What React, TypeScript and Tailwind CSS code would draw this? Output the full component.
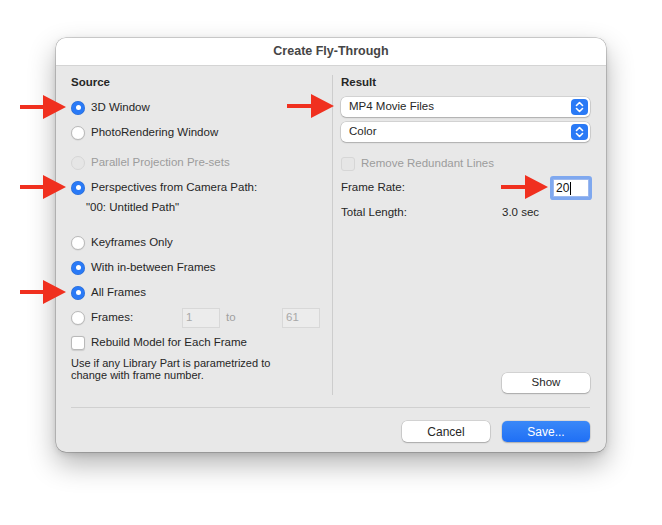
import React from "react";

const FONT = { fontFamily: '"Liberation Sans", Arial, sans-serif' };

function Radio({ state }: { state: "on" | "off" | "disabled" }) {
  if (state === "on")
    return (
      <span className="flex h-[14px] w-[14px] shrink-0 items-center justify-center rounded-full bg-[#2a7af6] shadow-[inset_0_0_0_0.5px_rgba(0,0,0,0.15)]">
        <span className="h-[5px] w-[5px] rounded-full bg-white" />
      </span>
    );
  if (state === "disabled")
    return <span className="h-[14px] w-[14px] shrink-0 rounded-full border border-[#d6d6d6] bg-[#e6e6e6]" />;
  return (
    <span className="h-[14px] w-[14px] shrink-0 rounded-full border border-[#b9b9b9] bg-white shadow-[0_0.5px_1px_rgba(0,0,0,0.12)]" />
  );
}

function Check({ disabled }: { disabled?: boolean }) {
  return disabled ? (
    <span className="h-[14px] w-[14px] shrink-0 rounded-[3px] border border-[#d6d6d6] bg-[#e6e6e6]" />
  ) : (
    <span className="h-[14px] w-[14px] shrink-0 rounded-[3px] border border-[#b9b9b9] bg-white shadow-[0_0.5px_1px_rgba(0,0,0,0.12)]" />
  );
}

function RadioRow({ state, label, className = "" }: { state: "on" | "off" | "disabled"; label: string; className?: string }) {
  return (
    <div className={`flex h-[25px] items-center gap-[6px] ${className}`}>
      <Radio state={state} />
      <span className={state === "disabled" ? "text-[#9c9c9c]" : "text-[#262626]"}>{label}</span>
    </div>
  );
}

function Popup({ label }: { label: string }) {
  return (
    <div className="flex h-[20px] items-center justify-between rounded-[5px] bg-white pl-[8px] pr-[2px] shadow-[0_0_0_0.5px_rgba(0,0,0,0.18),0_1px_1.5px_rgba(0,0,0,0.18)]">
      <span className="text-[#262626]">{label}</span>
      <span className="flex h-[16px] w-[17px] items-center justify-center rounded-[4px] bg-[#2a7af6]">
        <svg width="9" height="12" viewBox="0 0 9 12" fill="none" stroke="white" strokeWidth="1.6" strokeLinecap="round" strokeLinejoin="round">
          <path d="M1.5 4.5 L4.5 1.5 L7.5 4.5" />
          <path d="M1.5 7.5 L4.5 10.5 L7.5 7.5" />
        </svg>
      </span>
    </div>
  );
}

function Arrow({ left, top, width = 46 }: { left: number; top: number; width?: number }) {
  const h = 24;
  return (
    <svg
      className="absolute"
      style={{ left, top: top - h / 2 }}
      width={width}
      height={h}
      viewBox={`0 0 ${width} ${h}`}
    >
      <polygon
        points={`0,10 ${width - 23},10 ${width - 23},0 ${width},12 ${width - 23},24 ${width - 23},14 0,14`}
        fill="#f0301f"
      />
    </svg>
  );
}

export default function App() {
  return (
    <div className="relative h-[525px] w-[662px] bg-white pl-[56px] pt-[38px] text-[11.5px]" style={FONT}>
      <div className="flex h-[414px] w-[550px] flex-col overflow-hidden rounded-[10px] bg-[#e8e8e8] shadow-[0_0_0_0.5px_rgba(0,0,0,0.3),0_12px_28px_rgba(0,0,0,0.3),0_2px_6px_rgba(0,0,0,0.12)]">
        <div className="flex h-[28px] shrink-0 items-center justify-center border-b border-[#d4d4d4] bg-white">
          <span className="text-[12.5px] font-bold text-[#454545]">Create Fly-Through</span>
        </div>
        <div className="flex flex-col pl-[15px] pr-[16px] pt-[5px]">
          <div className="flex h-[325px]">
            {/* Left column */}
            <div className="flex w-[261px] flex-col">
              <div className="flex h-[24px] items-center font-bold text-[#262626]">Source</div>
              <RadioRow state="on" label="3D Window" />
              <RadioRow state="off" label="PhotoRendering Window" />
              <RadioRow state="disabled" label="Parallel Projection Pre-sets" className="mt-[5px]" />
              <RadioRow state="on" label="Perspectives from Camera Path:" />
              <div className="flex h-[16px] items-center pl-[15px] text-[#262626]">"00: Untitled Path"</div>
              <RadioRow state="off" label="Keyframes Only" className="mt-[14px]" />
              <RadioRow state="on" label="With in-between Frames" />
              <RadioRow state="on" label="All Frames" />
              <div className="flex h-[25px] items-center">
                <Radio state="off" />
                <span className="ml-[6px] w-[91px] text-[#262626]">Frames:</span>
                <span className="flex h-[20px] w-[38px] items-center border border-[#d8d8d8] bg-[#ececec] pl-[3px] text-[#a8a8a8]">1</span>
                <span className="ml-[6px] w-[56px] text-[#a0a0a0]">to</span>
                <span className="flex h-[20px] w-[38px] items-center border border-[#d8d8d8] bg-[#ececec] pl-[3px] text-[#a8a8a8]">61</span>
              </div>
              <div className="flex h-[25px] items-center gap-[6px]">
                <Check />
                <span className="text-[#262626]">Rebuild Model for Each Frame</span>
              </div>
              <div className="mt-[3px] text-[11px] leading-[11.5px] text-[#262626]">
                Use if any Library Part is parametrized to
                <br />
                change with frame number.
              </div>
            </div>
            {/* Divider */}
            <div className="mb-[1px] mt-[4px] w-px bg-[#cdcdcd]" />
            {/* Right column */}
            <div className="flex flex-1 flex-col pb-[3px] pl-[8px]">
              <div className="flex h-[24px] items-center font-bold text-[#262626]">Result</div>
              <div className="mt-[2px]">
                <Popup label="MP4 Movie Files" />
              </div>
              <div className="mt-[5px]">
                <Popup label="Color" />
              </div>
              <div className="mt-[9px] flex h-[25px] items-center gap-[6px]">
                <Check disabled />
                <span className="text-[#9c9c9c]">Remove Redundant Lines</span>
              </div>
              <div className="flex h-[24px] items-center justify-between pr-[1px]">
                <span className="text-[#262626]">Frame Rate:</span>
                <span className="flex h-[18px] w-[36px] items-center rounded-[1px] border border-[#9db9ee] bg-white pl-[2px] text-[12px] text-[#111] shadow-[0_0_0_3px_#7fa8ef]">
                  20<span className="ml-[1px] inline-block h-[13px] w-px bg-black" />
                </span>
              </div>
              <div className="flex h-[25px] items-center">
                <span className="w-[161px] text-[#262626]">Total Length:</span>
                <span className="text-[#262626]">3.0 sec</span>
              </div>
              <button className="mt-auto flex h-[20px] w-[88px] items-center justify-center self-end rounded-[5px] bg-white text-[#262626] shadow-[0_0_0_0.5px_rgba(0,0,0,0.18),0_1px_1.5px_rgba(0,0,0,0.2)]">
                Show
              </button>
            </div>
          </div>
          <div className="mt-[11px] h-px bg-[#d0d0d0]" />
          <div className="mt-[13px] flex justify-end gap-[12px]">
            <button className="flex h-[21px] w-[88px] items-center justify-center rounded-[5px] bg-white text-[12px] text-[#262626] shadow-[0_0_0_0.5px_rgba(0,0,0,0.18),0_1px_1.5px_rgba(0,0,0,0.2)]">
              Cancel
            </button>
            <button className="flex h-[21px] w-[88px] items-center justify-center rounded-[5px] bg-gradient-to-b from-[#3a88f8] to-[#1f6ff5] text-[12px] font-medium text-white shadow-[0_0_0_0.5px_rgba(0,0,0,0.12),0_1px_1.5px_rgba(0,0,0,0.2)]">
              Save...
            </button>
          </div>
        </div>
      </div>
      <Arrow left={20} top={107} />
      <Arrow left={20} top={187} />
      <Arrow left={20} top={292} />
      <Arrow left={287} top={106} width={47} />
      <Arrow left={501} top={187} width={47} />
    </div>
  );
}
